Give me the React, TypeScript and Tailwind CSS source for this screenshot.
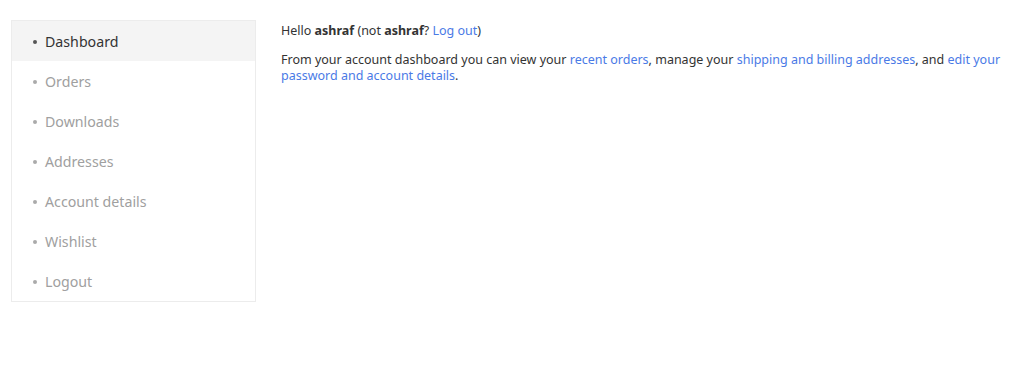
import React from "react";

const items = ["Dashboard", "Orders", "Downloads", "Addresses", "Account details", "Wishlist", "Logout"];

export default function App() {
  return (
    <div className="flex items-start bg-white pl-[11px] pt-[20px] text-[#333]" style={{ fontFamily: '"Noto Sans", "Open Sans", sans-serif' }}>
      <ul className="w-[245px] shrink-0 border border-[#ececec]">
        {items.map((it, i) => (
          <li
            key={it}
            className={`flex h-[40px] items-center pl-[21px] pt-[2px] text-[14.2px] ${i === 0 ? "bg-[#f4f4f4] text-[#333]" : "text-[#a0a0a0]"}`}
          >
            <span className={`mr-[8px] inline-block h-[4px] w-[4px] rounded-full ${i === 0 ? "bg-[#555]" : "bg-[#aaa]"}`} />
            {it}
          </li>
        ))}
      </ul>
      <div className="ml-[25px] flex-1 pr-[20px] text-[12.5px] leading-[16px] text-[#333]">
        <p className="mt-[3px]">
          Hello <strong>ashraf</strong> (not <strong>ashraf</strong>? <a className="text-[#4a7ae6]">Log out</a>)
        </p>
        <p className="mt-[13px]">
          From your account dashboard you can view your <a className="text-[#4a7ae6]">recent orders</a>, manage your{" "}
          <a className="text-[#4a7ae6]">shipping and billing addresses</a>, and{" "}
          <a className="text-[#4a7ae6]">edit your password and account details</a>.
        </p>
      </div>
    </div>
  );
}
